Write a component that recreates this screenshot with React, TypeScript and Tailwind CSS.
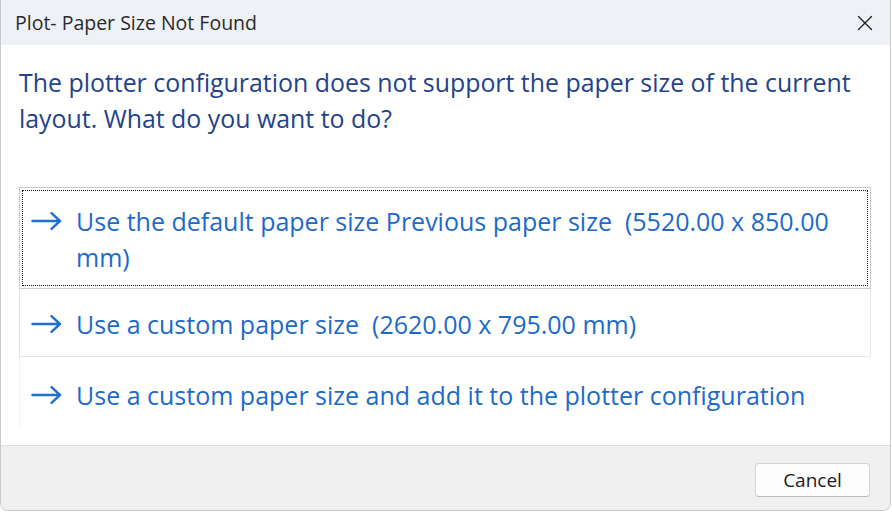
import React from 'react';

const font = { fontFamily: '"Open Sans", "Noto Sans", sans-serif' };

// Thin arrow used by Windows command links
function LinkArrow() {
  return (
    <svg width="32" height="18" viewBox="0 0 32 18" className="shrink-0">
      <path d="M1.5 9 H29 M20.5 1.2 L29 9 L20.5 16.8" fill="none" stroke="#1f6fd0" strokeWidth="2.4" strokeLinecap="round" strokeLinejoin="round" />
    </svg>
  );
}

export default function App() {
  return (
    <div className="w-[892px] h-[513px] bg-white overflow-hidden" style={font}>
      <div className="w-[891px] h-[511px] flex flex-col border-l border-b border-r border-[#c9c9c9] rounded-b-[8px] overflow-hidden">
        {/* title bar */}
        <div className="h-[45px] shrink-0 bg-[#eef2f6] flex items-center justify-between pl-[14px] pr-[17px]">
          <span className="text-[19.5px] text-[#2b2b2b]">Plot- Paper Size Not Found</span>
          <svg width="16" height="16" viewBox="0 0 16 16">
            <path d="M1.5 1.5 L14.5 14.5 M14.5 1.5 L1.5 14.5" stroke="#222" strokeWidth="1.4" strokeLinecap="round" />
          </svg>
        </div>

        {/* content */}
        <div className="flex-1 bg-white pl-[18px] pr-[19px] pt-[19px]">
          <p className="text-[24.9px] leading-[36px] text-[#23438c]">
            The plotter configuration does not support the paper size of the current
            <br />
            layout. What do you want to do?
          </p>

          <div className="mt-[51px] flex flex-col">
            <div className="h-[102px] border border-[#cdcdcd] p-[2px]">
              <div className="h-full border border-dotted border-[#222] flex items-start pl-[8px] pr-[10px] pt-[12px]">
                <div className="h-[36px] flex items-center mr-[13px]">
                  <LinkArrow />
                </div>
                <div className="text-[25px] leading-[36px] text-[#1d6acb] whitespace-pre-wrap">
                  {'Use the default paper size Previous paper size  (5520.00 x 850.00\nmm)'}
                </div>
              </div>
            </div>
            <div className="h-[68px] border border-[#e6e6e6] border-t-0 pl-[11px] pr-[10px] pt-[17px] flex items-start">
              <div className="h-[36px] mr-[13px] flex items-center">
                <LinkArrow />
              </div>
              <div className="text-[25px] leading-[36px] text-[#1d6acb] whitespace-pre-wrap">
                {'Use a custom paper size  (2620.00 x 795.00 mm)'}
              </div>
            </div>
            <div className="h-[70px] border-l border-[#f2f2f2] pl-[11px] pr-[10px] pt-[20px] flex items-start">
              <div className="h-[36px] mr-[13px] flex items-center">
                <LinkArrow />
              </div>
              <div className="text-[25px] leading-[36px] text-[#1d6acb]">
                Use a custom paper size and add it to the plotter configuration
              </div>
            </div>
          </div>
        </div>

        {/* footer */}
        <div className="h-[65px] shrink-0 bg-[#f0f0f0] border-t border-[#dedede] flex items-start justify-end pt-[17px] pr-[20px]">
          <button className="w-[115px] h-[34px] bg-[#fdfdfd] border border-[#d3d3d3] border-b-[#bdbdbd] rounded-[4px] text-[19px] text-[#1b1b1b]">
            Cancel
          </button>
        </div>
      </div>
    </div>
  );
}
